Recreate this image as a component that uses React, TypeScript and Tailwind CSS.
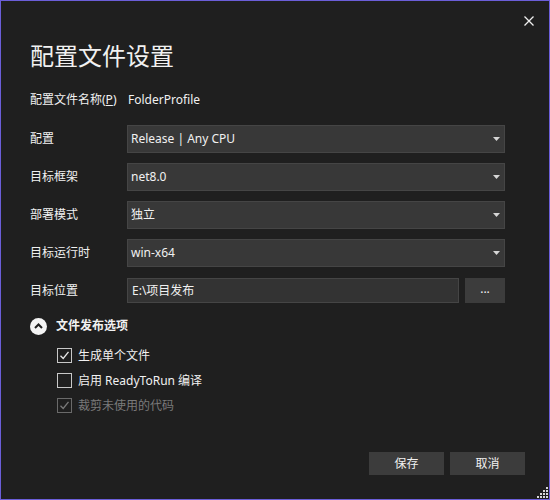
import React from 'react';

const fields = [
  { label: '配置', value: 'Release | Any CPU' },
  { label: '目标框架', value: 'net8.0' },
  { label: '部署模式', value: '独立' },
  { label: '目标运行时', value: 'win-x64' },
];

function Caret() {
  return (
    <svg width="7" height="4" viewBox="0 0 7 4" className="shrink-0">
      <path d="M0 0H7L3.5 4Z" fill="#d6d6d6" />
    </svg>
  );
}

function Check({ checked, disabled }: { checked: boolean; disabled?: boolean }) {
  const border = disabled ? 'border-[#6a6a6a]' : 'border-[#c8c8c8]';
  return (
    <span className={`w-[15px] h-[15px] border ${border} flex items-center justify-center shrink-0`}>
      {checked && (
        <svg width="11" height="11" viewBox="0 0 11 11">
          <path
            d="M1.5 5.8L4.2 8.5L9.5 1.8"
            fill="none"
            stroke={disabled ? '#7a7a7a' : '#e8e8e8'}
            strokeWidth="1.3"
          />
        </svg>
      )}
    </span>
  );
}

export default function App() {
  return (
    <div className="relative w-[550px] h-[500px] bg-[#1f1f1f] border border-[#6b5ed8] flex flex-col text-[#f1f1f1] text-[12px] font-['Noto_Sans','Noto_Sans_CJK_SC',sans-serif]">
      {/* close */}
      <button className="absolute top-[15px] right-[15px] w-[10px] h-[10px]" aria-label="关闭">
        <svg width="10" height="10" viewBox="0 0 10 10">
          <path d="M0.5 0.5L9.5 9.5M9.5 0.5L0.5 9.5" stroke="#f0f0f0" strokeWidth="1.3" />
        </svg>
      </button>

      <div className="flex flex-col pl-[29px] pr-[44px]">
        <h1 className="mt-[39px] h-8 leading-8 text-[24px] font-normal">配置文件设置</h1>

        <div className="mt-[18px] h-5 leading-5 flex">
          <span className="w-[98px]">配置文件名称(<span className="underline">P</span>)</span>
          <span>FolderProfile</span>
        </div>

        <div className="mt-[15px] flex flex-col gap-[10px]">
          {fields.map((f) => (
            <div key={f.label} className="h-[28px] flex items-center">
              <span className="w-[97px] shrink-0">{f.label}</span>
              <div className="flex-1 h-[28px] bg-[#383838] border border-[#454545] flex items-center pl-[3px] pr-[4px]">
                <span className="flex-1">{f.value}</span>
                <Caret />
              </div>
            </div>
          ))}
          <div className="h-[28px] flex items-start">
            <span className="w-[97px] shrink-0 h-[28px] leading-[28px]">目标位置</span>
            <div className="flex-1 mt-[1px] h-[25px] bg-[#333333] border border-[#454545] flex items-center pl-[4px]">
              E:\项目发布
            </div>
            <button className="ml-[6px] mt-[1px] w-[40px] h-[25px] bg-[#3c3c3c] leading-none pb-[4px]">...</button>
          </div>
        </div>

        <div className="mt-[12px] h-[18px] flex items-center">
          <span className="w-[17px] h-[17px] rounded-full bg-[#f4f4f4] flex items-center justify-center">
            <svg width="9" height="6" viewBox="0 0 9 6">
              <path d="M1 5L4.5 1.5L8 5" fill="none" stroke="#1f1f1f" strokeWidth="2" />
            </svg>
          </span>
          <span className="ml-[9px] font-bold">文件发布选项</span>
        </div>

        <div className="mt-[8px] ml-[27px] flex flex-col">
          <label className="h-[25px] flex items-center gap-[6px]">
            <Check checked />
            <span>生成单个文件</span>
          </label>
          <label className="h-[25px] flex items-center gap-[6px]">
            <Check checked={false} />
            <span>启用 ReadyToRun 编译</span>
          </label>
          <label className="h-[25px] flex items-center gap-[6px] text-[#7a7a7a]">
            <Check checked disabled />
            <span>裁剪未使用的代码</span>
          </label>
        </div>
      </div>

      <div className="mt-auto flex justify-end gap-[6px] pr-[24px] pb-[24px]">
        <button className="w-[75px] h-[23px] bg-[#3c3c3c]">保存</button>
        <button className="w-[75px] h-[23px] bg-[#3c3c3c]">取消</button>
      </div>

      {/* resize grip */}
      <div className="absolute right-[1px] bottom-[1px] grid grid-cols-4 gap-[1px]">
        {[0, 1, 2, 3].map((r) =>
          [0, 1, 2, 3].map((c) => (
            <span
              key={`${r}-${c}`}
              className={c >= 3 - r ? 'w-[2px] h-[2px] bg-[#d8d8d8]' : 'w-[2px] h-[2px]'}
            />
          ))
        )}
      </div>
    </div>
  );
}
